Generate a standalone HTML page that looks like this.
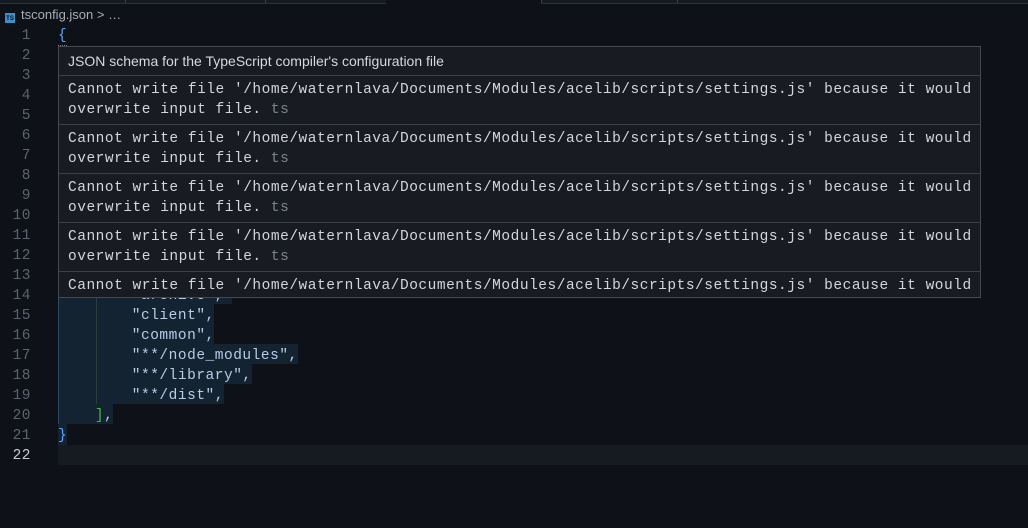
<!DOCTYPE html>
<html><head><meta charset="utf-8"><style>
html,body{margin:0;padding:0;width:1028px;height:528px;overflow:hidden;background:#0e1117;}
body{position:relative;font-family:"Liberation Mono",monospace;}
.tabs{position:absolute;left:0;top:0;width:1028px;height:3px;background:#161a21;border-bottom:1px solid #2c3038;}
.tabs .d{position:absolute;top:0;width:1px;height:3px;background:#3a3e46;}
.act{position:absolute;left:386px;top:0;width:155px;height:4px;background:#0e1117;}
.bc{position:absolute;left:5px;top:6px;height:18px;font:13px "Liberation Sans",sans-serif;color:#a8adb5;line-height:18px;}
.ts{display:inline-block;width:10px;height:10px;background:#3d8fc9;color:#0e1117;font-size:6px;line-height:12px;text-align:center;font-weight:bold;vertical-align:-1px;margin-right:6px;}
.ln{position:absolute;left:0;width:31px;text-align:right;color:#5c6370;font-size:14.5px;letter-spacing:0.5px;line-height:20px;margin-top:2px;}
.code{position:absolute;left:58px;font-size:14.5px;letter-spacing:0.52px;line-height:20px;white-space:pre;color:#b7cde6;margin-top:2px;}
.sel{position:absolute;background:#132332;}
.cur{position:absolute;left:58px;top:445px;width:970px;height:20px;background:#161a21;}
.guide{position:absolute;width:1px;background:#2b3b3f;}
.hover{position:absolute;left:58px;top:46px;width:921px;height:250px;background:#181b22;border:1px solid #454950;}
.hh{height:28px;border-bottom:1px solid #3b3f46;font:14px "Liberation Sans",sans-serif;color:#d6d9de;line-height:28px;padding-left:9px;}
.sec{height:44px;border-bottom:1px solid #3b3f46;padding-left:9px;font-size:14.5px;letter-spacing:0.52px;line-height:20px;color:#d3d6da;white-space:pre;padding-top:4px;box-sizing:content-box;}
.sec:last-child{border-bottom:none;}
.g{color:#7d838c;}
</style></head><body>
<div class="tabs"><div class="d" style="left:125px"></div><div class="d" style="left:265px"></div><div class="d" style="left:541px"></div><div class="d" style="left:677px"></div></div>
<div class="act"></div>
<div class="bc"><span class="ts">TS</span>tsconfig.json &gt; …</div>

<div class="sel" style="left:58px;top:284px;width:174px;height:20px"></div>
<div class="sel" style="left:58px;top:304px;width:156px;height:20px"></div>
<div class="sel" style="left:58px;top:324px;width:156px;height:20px"></div>
<div class="sel" style="left:58px;top:344px;width:240px;height:20px"></div>
<div class="sel" style="left:58px;top:364px;width:194px;height:20px"></div>
<div class="sel" style="left:58px;top:384px;width:166px;height:20px"></div>
<div class="sel" style="left:58px;top:404px;width:55px;height:20px"></div>
<div class="sel" style="left:58px;top:424px;width:9px;height:21px"></div>
<div class="cur"></div>
<div class="guide" style="left:96px;top:284px;height:120px"></div>
<div class="guide" style="left:58px;top:284px;height:140px;background:#2e4a66"></div>

<div class="ln" style="top:24px">1</div>
<div class="ln" style="top:44px">2</div><div class="ln" style="top:64px">3</div><div class="ln" style="top:84px">4</div><div class="ln" style="top:104px">5</div><div class="ln" style="top:124px">6</div><div class="ln" style="top:144px">7</div><div class="ln" style="top:164px">8</div><div class="ln" style="top:184px">9</div><div class="ln" style="top:204px">10</div><div class="ln" style="top:224px">11</div><div class="ln" style="top:244px">12</div><div class="ln" style="top:264px">13</div><div class="ln" style="top:284px">14</div><div class="ln" style="top:304px">15</div><div class="ln" style="top:324px">16</div><div class="ln" style="top:344px">17</div><div class="ln" style="top:364px">18</div><div class="ln" style="top:384px">19</div><div class="ln" style="top:404px">20</div><div class="ln" style="top:424px">21</div><div class="ln" style="top:444px;color:#c9ccd1">22</div>

<div class="code" style="top:24px;color:#58a6ff">{</div>
<div style="position:absolute;left:58px;top:43px;width:9px;height:2px;border-bottom:1px dotted #f14c4c"></div>
<div class="code" style="top:284px">        "archive",</div>
<div class="code" style="top:304px">        "client",</div>
<div class="code" style="top:324px">        "common",</div>
<div class="code" style="top:344px">        "**/node_modules",</div>
<div class="code" style="top:364px">        "**/library",</div>
<div class="code" style="top:384px">        "**/dist",</div>
<div class="code" style="top:404px">    <span style="color:#3fb950">]</span>,</div>
<div class="code" style="top:424px;color:#58a6ff">}</div>

<div class="hover">
<div class="hh">JSON schema for the TypeScript compiler's configuration file</div>
<div class="sec">Cannot write file '/home/waternlava/Documents/Modules/acelib/scripts/settings.js' because it would
overwrite input file. <span class="g">ts</span></div>
<div class="sec">Cannot write file '/home/waternlava/Documents/Modules/acelib/scripts/settings.js' because it would
overwrite input file. <span class="g">ts</span></div>
<div class="sec">Cannot write file '/home/waternlava/Documents/Modules/acelib/scripts/settings.js' because it would
overwrite input file. <span class="g">ts</span></div>
<div class="sec">Cannot write file '/home/waternlava/Documents/Modules/acelib/scripts/settings.js' because it would
overwrite input file. <span class="g">ts</span></div>
<div class="sec" style="height:20px;overflow:hidden">Cannot write file '/home/waternlava/Documents/Modules/acelib/scripts/settings.js' because it would</div>
</div>
</body></html>
